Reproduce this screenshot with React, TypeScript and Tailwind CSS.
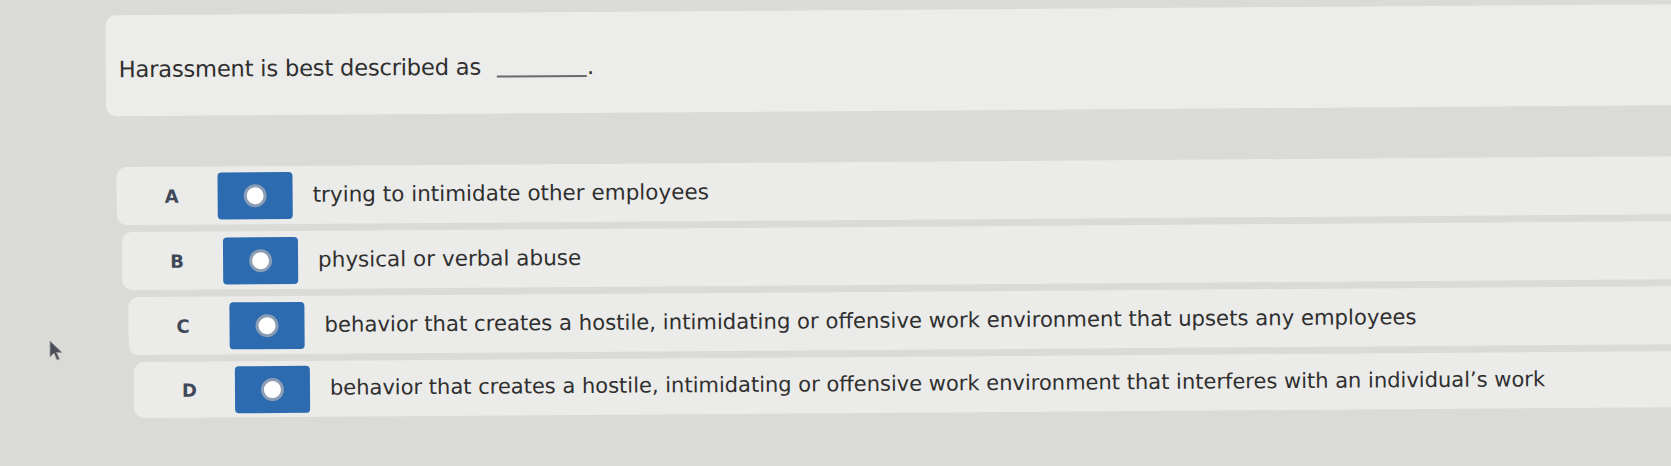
import React from "react";

const options = [
  { l: "A", t: "trying to intimidate other employees", off: "ml-[117px]", h: "h-[58px]", mt: "mt-[51px]", fs: "text-[21.5px]" },
  { l: "B", t: "physical or verbal abuse", off: "ml-[122px]", h: "h-[58px]", mt: "mt-[7px]", fs: "text-[21.5px]" },
  { l: "C", t: "behavior that creates a hostile, intimidating or offensive work environment that upsets any employees", off: "ml-[128px]", h: "h-[58px]", mt: "mt-[7px]", fs: "text-[21.2px]" },
  { l: "D", t: "behavior that creates a hostile, intimidating or offensive work environment that interferes with an individual\u2019s work", off: "ml-[133px]", h: "h-[56px]", mt: "mt-[7px]", fs: "text-[21px]" },
];

function Radio() {
  return (
    <div className="w-[75px] h-[47px] shrink-0 rounded-[4px] bg-[#2c6bb0] flex items-center justify-center">
      <div className="w-[23px] h-[23px] rounded-full bg-[#8b9db4] flex items-center justify-center">
        <div className="w-[17px] h-[17px] rounded-full bg-white" />
      </div>
    </div>
  );
}

export default function App() {
  return (
    <div className="relative w-[1671px] h-[466px] overflow-hidden bg-[#dadad7] font-['DejaVu_Sans',_Verdana,_sans-serif]">
      <div className="w-[1740px] origin-[0px_250px] -rotate-[0.4deg]">
        <div className="pt-[16px] pl-[107px]">
          <div className="h-[101px] bg-[#ececea] rounded-l-[10px] flex items-center pl-[13px] pt-[9px]">
            <span className="text-[22.6px] text-[#2f2f2f] tracking-[-0.2px]">
              Harassment is best described as{" "}
              <span className="inline-block ml-[9px] w-[90px] border-b-[2px] border-[#6a6a6a] align-baseline translate-y-[3px]" />.
            </span>
          </div>
        </div>
        {options.map((o) => (
          <div
            key={o.l}
            className={`${o.off} ${o.h} ${o.mt} bg-[#ebebe9] rounded-l-[10px] flex items-center pl-[48px]`}
          >
            <div className="w-[53px] shrink-0 text-[18px] font-bold text-[#3f4858]">{o.l}</div>
            <Radio />
            <div className={`ml-[20px] ${o.fs} text-[#2f2f2f] whitespace-nowrap`}>{o.t}</div>
          </div>
        ))}
      </div>
      <svg
        className="absolute left-[48px] top-[340px]"
        width="16"
        height="22"
        viewBox="0 0 16 22"
      >
        <path d="M2 1 L2 17 L6 13 L9 20 L11.5 19 L8.5 12.5 L14 12.5 Z" fill="#4a4d55" stroke="#9a9ca3" strokeWidth="0.8" />
      </svg>
    </div>
  );
}
